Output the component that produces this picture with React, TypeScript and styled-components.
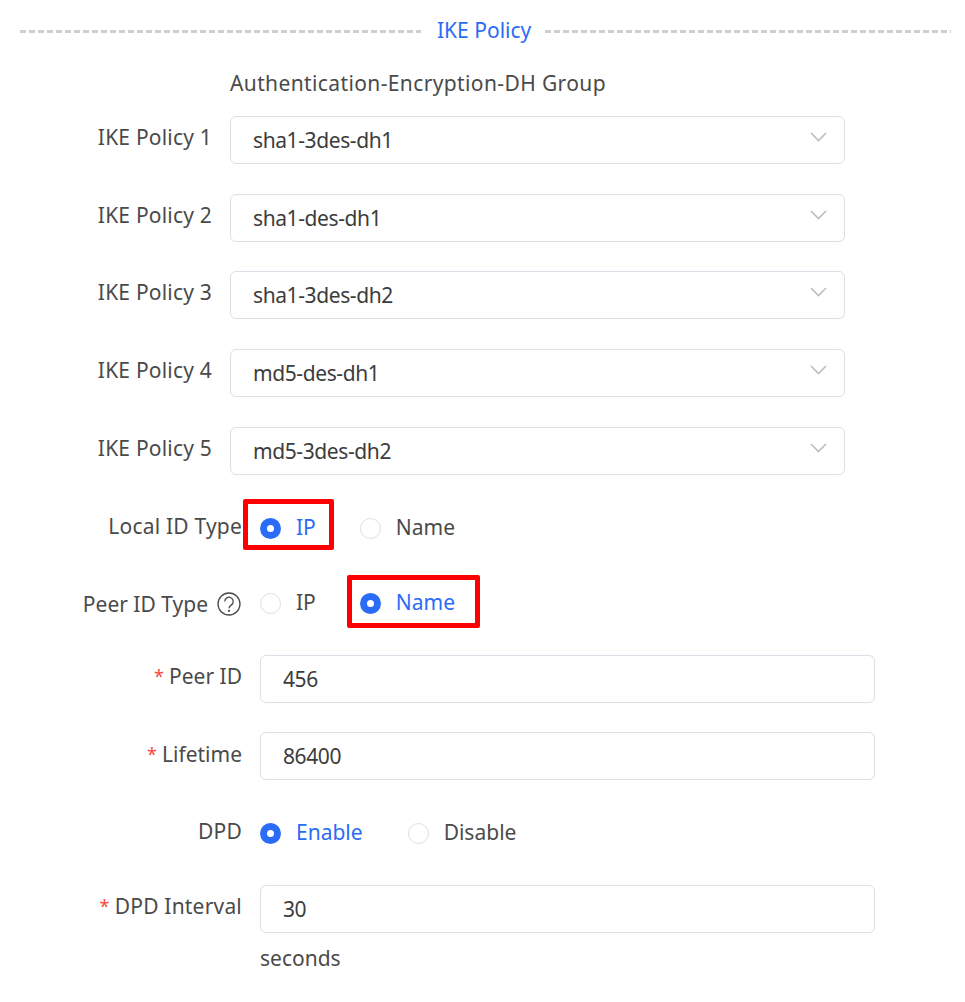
import React, { FunctionComponent } from "react";
import styled, { createGlobalStyle } from "styled-components";

const GlobalStyle = createGlobalStyle`
  html, body {
    margin: 0;
    padding: 0;
    background: #fff;
  }
  body {
    font-family: "Noto Sans", "Open Sans", sans-serif;
    font-size: 21px;
    color: #4a4a4a;
  }
`;

const Page = styled.div`
  width: 965px;
  height: 1002px;
  overflow: hidden;
  padding-top: 17px;
  box-sizing: border-box;
`;

// section title with dashed lines
const Divider = styled.div`
  display: flex;
  align-items: center;
  gap: 15px;
  height: 28px;
  padding: 0 14px 0 20px;
`;
const DashLine = styled.div<{ $width?: number }>`
  flex: ${(p) => (p.$width ? `0 0 ${p.$width}px` : "1")};
  height: 3px;
  background: repeating-linear-gradient(to right, #cfcfcf 0 6px, transparent 6px 9px);
`;
const DividerTitle = styled.span`
  color: #2b6cf6;
  line-height: 28px;
  margin: 0 -1px 2px 1px;
`;

const Hint = styled.div`
  margin: 22px 0 0 230px;
  height: 32px;
  line-height: 32px;
  letter-spacing: 0.38px;
`;

type RowProps = { $labelWidth: number; $top: number; $height?: number };
const Row = styled.div<RowProps>`
  display: grid;
  grid-template-columns: ${(p) => p.$labelWidth}px 615px;
  column-gap: 18px;
  margin-top: ${(p) => p.$top}px;
  height: ${(p) => p.$height ?? 48}px;
`;
const Label = styled.label<{ $shift?: number; $tight?: boolean }>`
  display: flex;
  justify-content: flex-end;
  align-items: center;
  white-space: nowrap;
  line-height: 32px;
  height: 32px;
  letter-spacing: ${(p) => (p.$tight ? 0 : 0.2)}px;
  margin-top: ${(p) => p.$shift ?? 5}px;
`;
const Required = styled.span`
  color: #f5483b;
  font-size: 18px;
  margin-right: 5px;
`;
const HelpIcon = styled.svg`
  width: 24px;
  height: 24px;
  margin: 0 1.5px 0 8.5px;
  flex: none;
  fill: none;
  stroke: #4a4a4a;
  stroke-width: 1.3;
`;

const Field = styled.div`
  display: flex;
  align-items: center;
  justify-content: space-between;
  height: 48px;
  box-sizing: border-box;
  border: 1px solid #dcdfe8;
  border-radius: 6px;
  padding: 0 17px 0 22px;
  color: #3c3c3c;
  letter-spacing: -0.4px;
`;
const Chevron = styled.svg`
  width: 17px;
  height: 10px;
  margin-top: -6px;
  fill: none;
  stroke: #bdbdbd;
  stroke-width: 1.6;
`;

const RadioGroup = styled.div`
  display: flex;
  align-items: center;
  height: 100%;
  box-sizing: border-box;
  padding-bottom: 2px;
`;
const Option = styled.div<{ $gap?: number; $checked?: boolean }>`
  position: relative;
  display: flex;
  align-items: center;
  margin-right: ${(p) => p.$gap ?? 44}px;
  color: ${(p) => (p.$checked ? "#2b6cf6" : "#4a4a4a")};
`;
const Dot = styled.span<{ $checked?: boolean }>`
  display: block;
  width: 21px;
  height: 21px;
  box-sizing: border-box;
  border-radius: 50%;
  margin-right: 15px;
  background: ${(p) => (p.$checked ? "#2b6cf6" : "#fff")};
  border: ${(p) => (p.$checked ? "none" : "1px solid #dcdfe8")};
  position: relative;
  top: 1px;
  &::after {
    content: "";
    display: ${(p) => (p.$checked ? "block" : "none")};
    position: absolute;
    left: 7px;
    top: 7px;
    width: 7px;
    height: 7px;
    border-radius: 50%;
    background: #fff;
  }
`;
// red annotation drawn over the option
const Mark = styled.span<{ $l: number; $r: number; $t: number; $b: number }>`
  position: absolute;
  left: ${(p) => p.$l}px;
  right: ${(p) => p.$r}px;
  top: ${(p) => p.$t}px;
  bottom: ${(p) => p.$b}px;
  border: 5px solid #ff0000;
  border-radius: 2px;
`;
const Note = styled.div`
  margin: 9px 0 0 260px;
  line-height: 32px;
`;

const policies: string[] = [
  "sha1-3des-dh1",
  "sha1-des-dh1",
  "sha1-3des-dh2",
  "md5-des-dh1",
  "md5-3des-dh2",
];
const policyTops = [17, 30, 29, 30, 30];

const App: FunctionComponent = () => {
  return (
    <Page>
      <GlobalStyle />
      <Divider>
        <DashLine $width={401} />
        <DividerTitle>IKE Policy</DividerTitle>
        <DashLine />
      </Divider>
      <Hint>Authentication-Encryption-DH Group</Hint>

      {/* policies */}
      {policies.map((policy, i) => (
        <Row key={policy} $labelWidth={212} $top={policyTops[i]}>
          <Label>IKE Policy {i + 1}</Label>
          <Field>
            {policy}
            <Chevron viewBox="0 0 17 10">
              <polyline points="1,1 8.5,8.5 16,1" />
            </Chevron>
          </Field>
        </Row>
      ))}

      {/* id types */}
      <Row $labelWidth={242} $top={31} $height={44}>
        <Label $shift={4}>Local ID Type</Label>
        <RadioGroup>
          <Option $checked>
            <Dot $checked />
            IP
            <Mark $l={-17} $r={-18} $t={-14} $b={-9} />
          </Option>
          <Option>
            <Dot />
            Name
          </Option>
        </RadioGroup>
      </Row>
      <Row $labelWidth={242} $top={31} $height={44}>
        <Label $shift={7} $tight>
          Peer ID Type
          <HelpIcon viewBox="0 0 24 24">
            <circle cx="12" cy="12" r="11" />
            <path d="M7.8 9.5a4.2 4.2 0 1 1 6.6 3.4c-1.4 1-2.4 1.8-2.4 3.3" />
            <circle cx="12" cy="18.8" r="0.5" />
          </HelpIcon>
        </Label>
        <RadioGroup>
          <Option>
            <Dot />
            IP
          </Option>
          <Option $checked>
            <Dot $checked />
            Name
            <Mark $l={-13} $r={-25} $t={-13} $b={-12} />
          </Option>
        </RadioGroup>
      </Row>

      {/* peer */}
      <Row $labelWidth={242} $top={30}>
        <Label $tight>
          <Required>*</Required>Peer ID
        </Label>
        <Field>456</Field>
      </Row>
      <Row $labelWidth={242} $top={29}>
        <Label $shift={6} $tight>
          <Required>*</Required>Lifetime
        </Label>
        <Field>86400</Field>
      </Row>

      {/* dpd */}
      <Row $labelWidth={242} $top={31} $height={44}>
        <Label $shift={4}>DPD</Label>
        <RadioGroup>
          <Option $checked $gap={45}>
            <Dot $checked />
            Enable
          </Option>
          <Option>
            <Dot />
            Disable
          </Option>
        </RadioGroup>
      </Row>
      <Row $labelWidth={242} $top={30}>
        <Label>
          <Required>*</Required>DPD Interval
        </Label>
        <Field>30</Field>
      </Row>
      <Note>seconds</Note>
    </Page>
  );
};

export default App;
